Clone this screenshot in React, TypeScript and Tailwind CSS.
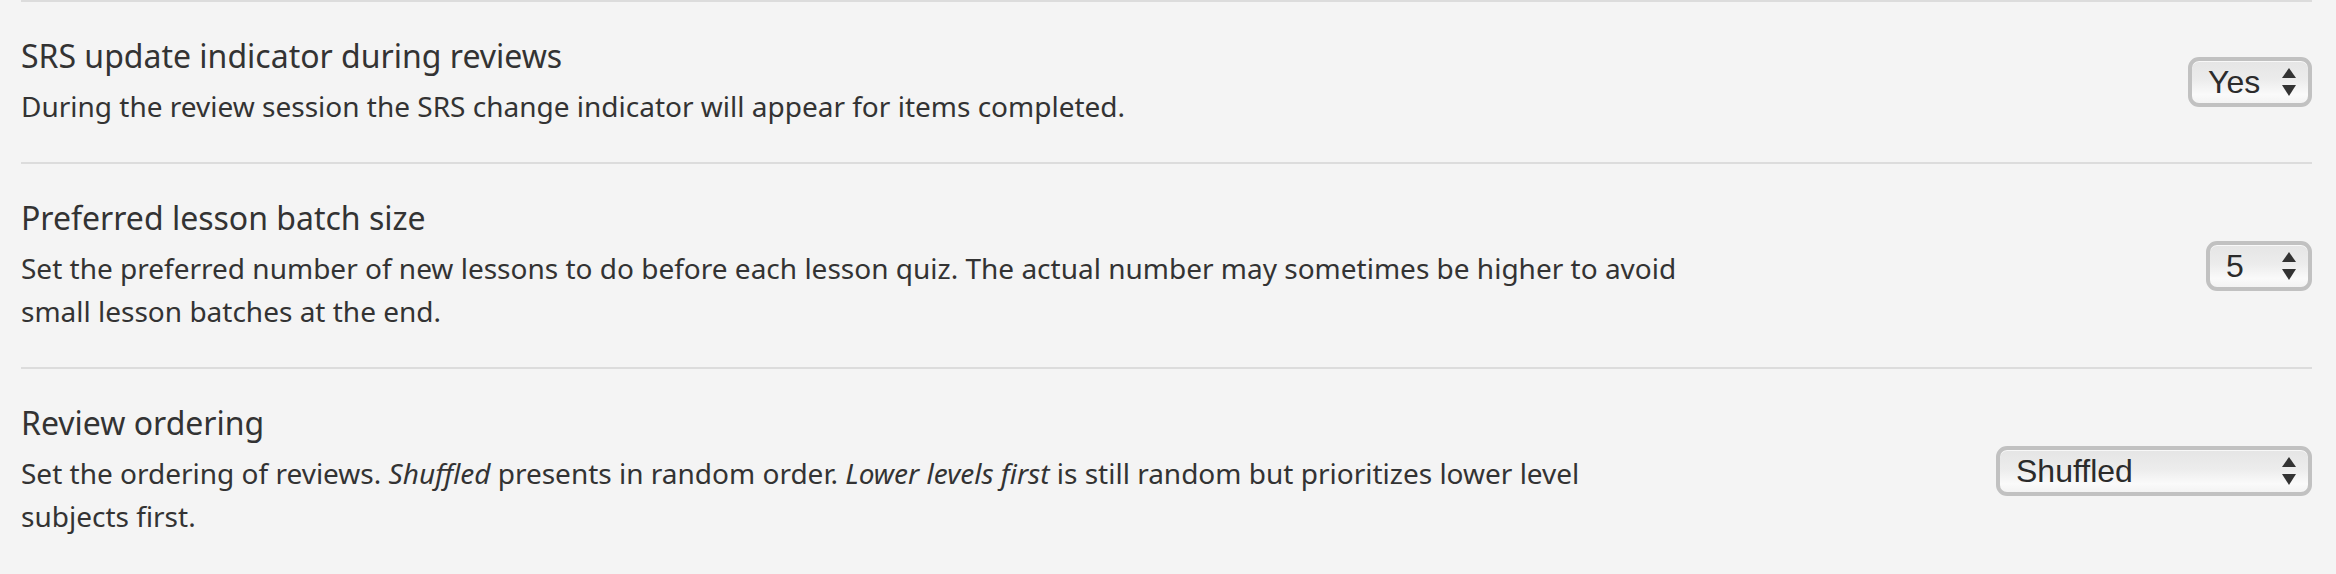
import React from "react";

function Arrows() {
  return (
    <svg width="14" height="28" viewBox="0 0 14 28" className="shrink-0">
      <path d="M7 0 L14 10 L0 10 Z" fill="#333" />
      <path d="M0 17 L14 17 L7 28 Z" fill="#333" />
    </svg>
  );
}

function FakeSelect({ value, width }: { value: string; width: string }) {
  return (
    <div
      className={`${width} h-[50px] shrink-0 flex items-center justify-between rounded-[11px] border-[4px] border-[#c1c1c1] bg-[linear-gradient(#e5e5e5,#ececec_45%,#fafafa_80%,#f3f3f3)] pl-[16px] pr-[12px] shadow-[inset_0_1px_0_#f8f8f8]`}
    >
      <span className="text-[32px] leading-none text-[#2b2b2b] font-['Liberation_Sans',Arial,sans-serif]">
        {value}
      </span>
      <Arrows />
    </div>
  );
}

function Row({
  title,
  children,
  control,
}: {
  title: string;
  children: React.ReactNode;
  control: React.ReactNode;
}) {
  return (
    <div className="flex items-center justify-between border-t-2 border-[#dcdcdc] pt-[34px] pb-[34px]">
      <div className="flex flex-col">
        <div className="text-[32px] leading-[40px] text-[#333]">{title}</div>
        <div className="mt-[9px] max-w-[1662px] text-[28px] leading-[43px] text-[#333]">
          {children}
        </div>
      </div>
      {control}
    </div>
  );
}

export default function App() {
  return (
    <div className="min-h-[574px] w-full bg-[#f4f4f4] pl-[21px] pr-[24px] font-['Noto_Sans','Open_Sans',sans-serif]">
      <Row
        title="SRS update indicator during reviews"
        control={<FakeSelect value="Yes" width="w-[124px]" />}
      >
        During the review session the SRS change indicator will appear for items completed.
      </Row>
      <Row
        title="Preferred lesson batch size"
        control={<FakeSelect value="5" width="w-[106px]" />}
      >
        Set the preferred number of new lessons to do before each lesson quiz. The actual number may
        sometimes be higher to avoid small lesson batches at the end.
      </Row>
      <Row
        title="Review ordering"
        control={<FakeSelect value="Shuffled" width="w-[316px]" />}
      >
        Set the ordering of reviews. <em>Shuffled</em> presents in random order.{" "}
        <em>Lower levels first</em> is still random but prioritizes lower level subjects first.
      </Row>
    </div>
  );
}
